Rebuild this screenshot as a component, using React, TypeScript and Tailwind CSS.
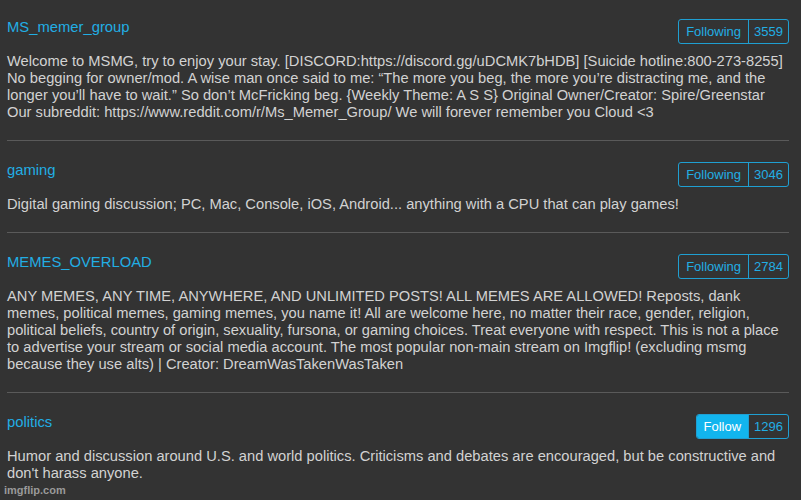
import React from "react";

type Stream = {
  name: string;
  // lines as they wrap on the original page
  description: string[];
  followers: number;
  following: boolean;
};

const STREAMS: Stream[] = [
  {
    name: "MS_memer_group",
    description: [
      "Welcome to MSMG, try to enjoy your stay. [DISCORD:https://discord.gg/uDCMK7bHDB] [Suicide hotline:800-273-8255]",
      "No begging for owner/mod. A wise man once said to me: \u201cThe more you beg, the more you\u2019re distracting me, and the",
      "longer you\u2019ll have to wait.\u201d So don\u2019t McFricking beg. {Weekly Theme: A S S} Original Owner/Creator: Spire/Greenstar",
      "Our subreddit: https://www.reddit.com/r/Ms_Memer_Group/ We will forever remember you Cloud <3",
    ],
    followers: 3559,
    following: true,
  },
  {
    name: "gaming",
    description: [
      "Digital gaming discussion; PC, Mac, Console, iOS, Android... anything with a CPU that can play games!",
    ],
    followers: 3046,
    following: true,
  },
  {
    name: "MEMES_OVERLOAD",
    description: [
      "ANY MEMES, ANY TIME, ANYWHERE, AND UNLIMITED POSTS! ALL MEMES ARE ALLOWED! Reposts, dank",
      "memes, political memes, gaming memes, you name it! All are welcome here, no matter their race, gender, religion,",
      "political beliefs, country of origin, sexuality, fursona, or gaming choices. Treat everyone with respect. This is not a place",
      "to advertise your stream or social media account. The most popular non-main stream on Imgflip! (excluding msmg",
      "because they use alts) | Creator: DreamWasTakenWasTaken",
    ],
    followers: 2784,
    following: true,
  },
  {
    name: "politics",
    description: [
      "Humor and discussion around U.S. and world politics. Criticisms and debates are encouraged, but be constructive and",
      "don't harass anyone.",
    ],
    followers: 1296,
    following: false,
  },
];

const FollowButton: React.FC<{ following: boolean; count: number }> = ({ following, count }) => (
  <div className="flex h-[25px] items-stretch overflow-hidden rounded-[3px] border border-[#1f9fd2] text-[13px] leading-none">
    <span
      className={`flex items-center px-[7px] ${
        following ? "text-[#22aee4]" : "bg-[#12b5ee] text-white"
      }`}
    >
      {following ? "Following" : "Follow"}
    </span>
    <span className="flex items-center border-l border-[#1f9fd2] px-[5px] text-[#22aee4]">{count}</span>
  </div>
);

export default function App() {
  return (
    <div
      className="relative h-[500px] w-[801px] overflow-hidden bg-[#333333] pl-[7px] pr-[12px] pt-[19px]"
      style={{ fontFamily: '"Liberation Sans", Arial, sans-serif' }}
    >
      {STREAMS.map((stream, i) => (
        <div key={stream.name} className={i > 0 ? "border-t border-[#5a5a5a] pt-[21px]" : ""}>
          <div className="flex h-[25px] items-start justify-between">
            <a className="pt-[1px] text-[14.8px] leading-none text-[#22aee4]">{stream.name}</a>
            <FollowButton following={stream.following} count={stream.followers} />
          </div>
          <p className="mt-[9px] pb-[19px] text-[14.7px] leading-[17px] text-[#d2d2d2]">
            {stream.description.map((line) => (
              <span key={line} className="block whitespace-nowrap">
                {line}
              </span>
            ))}
          </p>
        </div>
      ))}
      <div className="absolute bottom-[2px] left-[4px] text-[11px] font-bold text-[#9a9a9a]">imgflip.com</div>
    </div>
  );
}
